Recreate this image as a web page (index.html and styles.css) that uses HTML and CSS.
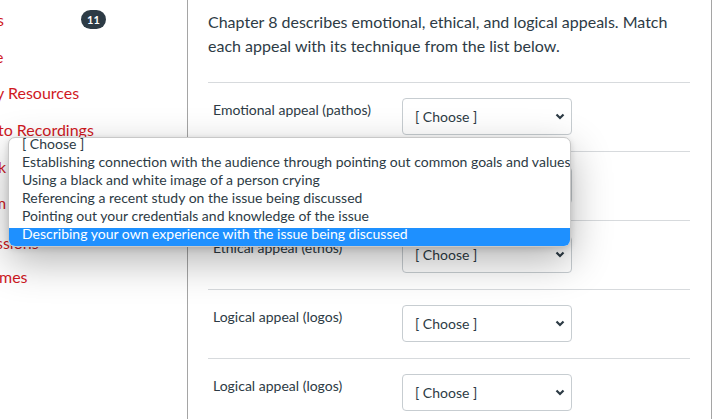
FILE: index.html
```html
<!DOCTYPE html>
<html lang="en">
<head>
<meta charset="utf-8">
<title>Quiz</title>
<link rel="stylesheet" href="styles.css">
</head>
<body>
<div class="page">
  <nav class="nav">
    <div class="nav-item"><span class="t t1">s</span><span class="badge">11</span></div>
    <div class="nav-item"><span class="t t2">e</span></div>
    <div class="nav-item"><span class="t t3">y Resources</span></div>
    <div class="nav-item"><span class="t t4">to Recordings</span></div>
    <div class="nav-item"><span class="t t5">k</span></div>
    <div class="nav-item"><span class="t t6">m</span></div>
    <div class="nav-item low"><span class="t t7">ssions</span></div>
    <div class="nav-item"><span class="t t8">mes</span></div>
  </nav>
  <main class="content">
    <p class="question">Chapter 8 describes emotional, ethical, and logical appeals. Match each appeal with its technique from the list below.</p>
    <div class="row">
      <div class="label">Emotional appeal (pathos)</div>
      <div class="select"><span>[ Choose ]</span><svg class="chev" viewBox="0 0 10 7" width="10" height="7"><path d="M1.5 1.5 L5 5 L8.5 1.5" fill="none" stroke="#2d3b45" stroke-width="2.2"/></svg></div>
    </div>
    <div class="row">
      <div class="label">Emotional appeal (pathos)</div>
      <div class="select"><span>[ Choose ]</span><svg class="chev" viewBox="0 0 10 7" width="10" height="7"><path d="M1.5 1.5 L5 5 L8.5 1.5" fill="none" stroke="#2d3b45" stroke-width="2.2"/></svg></div>
    </div>
    <div class="row">
      <div class="label">Ethical appeal (ethos)</div>
      <div class="select"><span>[ Choose ]</span><svg class="chev" viewBox="0 0 10 7" width="10" height="7"><path d="M1.5 1.5 L5 5 L8.5 1.5" fill="none" stroke="#2d3b45" stroke-width="2.2"/></svg></div>
    </div>
    <div class="row">
      <div class="label">Logical appeal (logos)</div>
      <div class="select"><span>[ Choose ]</span><svg class="chev" viewBox="0 0 10 7" width="10" height="7"><path d="M1.5 1.5 L5 5 L8.5 1.5" fill="none" stroke="#2d3b45" stroke-width="2.2"/></svg></div>
    </div>
    <div class="row">
      <div class="label">Logical appeal (logos)</div>
      <div class="select"><span>[ Choose ]</span><svg class="chev" viewBox="0 0 10 7" width="10" height="7"><path d="M1.5 1.5 L5 5 L8.5 1.5" fill="none" stroke="#2d3b45" stroke-width="2.2"/></svg></div>
    </div>
  </main>
  <div class="gutter"></div>
</div>
<ul class="popup">
  <li class="opt">[ Choose ]</li>
  <li class="opt">Establishing connection with the audience through pointing out common goals and values</li>
  <li class="opt">Using a black and white image of a person crying</li>
  <li class="opt">Referencing a recent study on the issue being discussed</li>
  <li class="opt">Pointing out your credentials and knowledge of the issue</li>
  <li class="opt sel">Describing your own experience with the issue being discussed</li>
</ul>
</body>
</html>
```

FILE: styles.css
```css
html, body {
  margin: 0;
  padding: 0;
  background: #fff;
  overflow: hidden;
}
body {
  font-family: Lato, "Open Sans", sans-serif;
  color: #2d3b45;
  width: 719px;
  height: 419px;
  position: relative;
}
.page {
  display: flex;
  height: 419px;
}
.nav {
  width: 187px;
  flex: none;
  border-right: 1px solid #a5a5a5;
  padding-top: 1px;
  box-sizing: content-box;
  overflow: hidden;
}
.nav-item {
  height: 36.7px;
  display: flex;
  align-items: center;
  font-size: 16px;
  color: #d0191f;
  white-space: nowrap;
}
.nav-item.low {
  box-sizing: border-box;
  padding-top: 6px;
}
.t1 { margin-left: -3px; }
.t2 { margin-left: -5px; }
.t3 { margin-left: -4px; }
.t4 { margin-left: -2px; }
.t5 { margin-left: -2px; }
.t6 { margin-left: -7px; }
.t7 { margin-left: -4px; }
.t8 { margin-left: -1px; }
.badge {
  margin-left: 77px;
  background: #2d3b45;
  color: #fff;
  font-size: 11px;
  font-weight: 700;
  height: 19px;
  min-width: 25px;
  border-radius: 10px;
  display: flex;
  align-items: center;
  justify-content: center;
  box-sizing: border-box;
}
.content {
  width: 482px;
  flex: none;
  padding: 0 21px 0 20px;
  border-right: 1px solid #a5a5a5;
}
.gutter { flex: 1; }
.question {
  margin: 10px 0 24px;
  font-size: 16px;
  line-height: 24px;
}
.row {
  border-top: 1px solid #d7dadd;
  display: flex;
  align-items: flex-start;
  padding-top: 15px;
  box-sizing: border-box;
  height: 69px;
}
.label {
  width: 189px;
  padding-left: 5px;
  font-size: 14px;
  line-height: 24px;
}
.select {
  width: 170px;
  height: 37px;
  border: 1px solid #c7cdd1;
  border-radius: 4px;
  box-sizing: border-box;
  display: flex;
  align-items: center;
  justify-content: space-between;
  padding: 0 6px 0 12px;
  font-size: 14px;
}
.chev { display: block; }
.popup {
  position: absolute;
  left: 8px;
  top: 137px;
  width: 563px;
  margin: 0;
  padding: 0;
  list-style: none;
  background: #fff;
  border: 1px solid #c8c8c8;
  border-radius: 7px;
  box-sizing: border-box;
  overflow: hidden;
  box-shadow: 0 14px 40px rgba(0,0,0,0.3), 0 2px 6px rgba(0,0,0,0.14);
}
.opt {
  height: 18px;
  line-height: 12px;
  padding-left: 13px;
  font-size: 14px;
  color: #2d3b45;
  white-space: nowrap;
}
.sel {
  background: #1e90ff;
  color: #fff;
}
```
